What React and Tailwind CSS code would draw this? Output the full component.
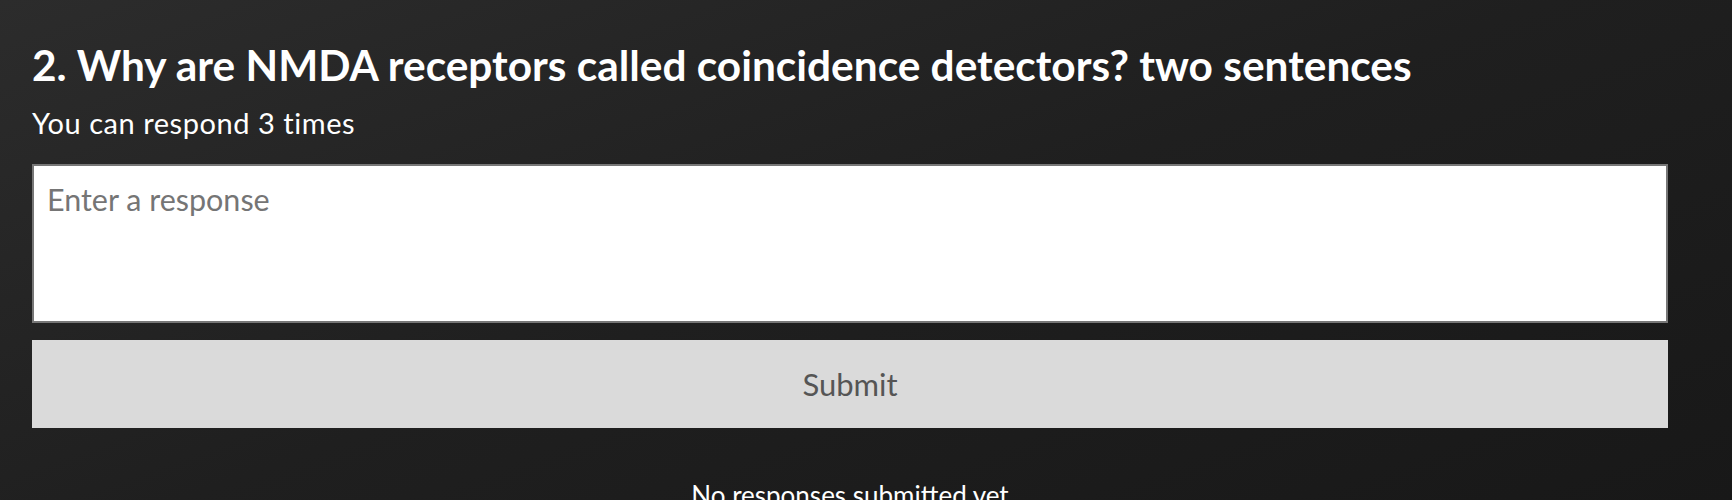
import React from "react";

export default function App() {
  return (
    <div
      className="w-full h-[500px] overflow-hidden bg-[linear-gradient(160deg,#2c2c2c_0%,#1f1f1f_50%,#181818_100%)] text-white"
      style={{ fontFamily: "Lato, 'Open Sans', sans-serif" }}
    >
      <div className="pl-[32px] pr-[64px]">
        <h2 className="pt-[40px] text-[42.4px] leading-[50px] font-bold text-white">
          2. Why are NMDA receptors called coincidence detectors? two sentences
        </h2>
        <p className="mt-[16px] text-[29px] leading-[34px] tracking-[0.55px] text-white">You can respond 3 times</p>
        <textarea
          className="mt-[24px] block w-full h-[159px] border-2 border-[#777777] bg-white px-[13px] pt-[15px] text-[30.5px] leading-[36px] text-black placeholder:text-[#757575] resize-none outline-none"
          placeholder="Enter a response"
        />
        <button className="mt-[17px] block w-full h-[88px] bg-[#dadada] text-[31px] text-[#555555]">
          Submit
        </button>
        <p className="mt-[50px] text-center text-[26px] leading-[34px] text-white">No responses submitted yet</p>
      </div>
    </div>
  );
}
